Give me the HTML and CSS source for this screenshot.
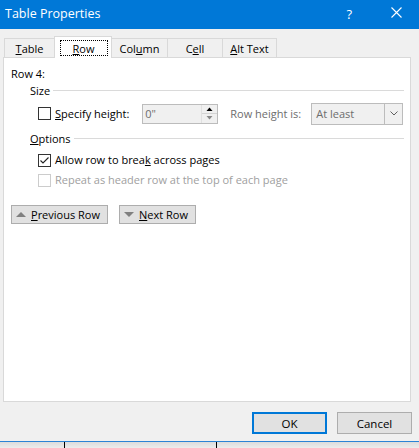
FILE: index.html
```html
<!DOCTYPE html>
<html>
<head>
<meta charset="utf-8">
<link rel="stylesheet" href="styles.css">
</head>
<body>
<div class="window">
  <div class="titlebar">
    <span class="title">Table Properties</span>
    <span class="help">?</span>
    <svg class="close" width="11" height="11" viewBox="0 0 11 11"><path d="M0.5 0.5 L10.5 10.5 M10.5 0.5 L0.5 10.5" stroke="#fff" stroke-width="1.1" fill="none"/></svg>
  </div>
  <div class="client">
    <div class="tabs">
      <div class="tab w-table"><u>T</u>able</div>
      <div class="tab tab-sel w-row"><span class="focus"><u>R</u>ow</span></div>
      <div class="tab w-col">Col<u>u</u>mn</div>
      <div class="tab w-cell">C<u>e</u>ll</div>
      <div class="tab w-alt"><u>A</u>lt Text</div>
    </div>
    <div class="panel">
      <div class="line rowlabel">Row 4:</div>
      <div class="group-head g-size"><span>Size</span><span class="rule"></span></div>
      <div class="size-row">
        <span class="cb"></span>
        <span class="lbl"><u>S</u>pecify height:</span>
        <span class="spin">
          <span class="spin-val">0"</span>
          <span class="spin-btns">
            <span class="sb sb-up"><svg width="7" height="4" viewBox="0 0 7 4"><path d="M0.5 4 L3.5 0.5 L6.5 4 Z" fill="#000"/></svg></span>
            <span class="sb sb-down"><svg width="7" height="4" viewBox="0 0 7 4"><path d="M0.5 0 L6.5 0 L3.5 3.5 Z" fill="#8a8a8a"/></svg></span>
          </span>
        </span>
        <span class="lbl dis1 rh">Row height is:</span>
        <span class="select">
          <span class="sel-val">At least</span>
          <span class="sel-btn"><svg width="8" height="5" viewBox="0 0 8 5"><path d="M0.5 0.5 L4 4 L7.5 0.5" stroke="#606060" stroke-width="1" fill="none"/></svg></span>
        </span>
      </div>
      <div class="group-head g-opt"><span><u>O</u>ptions</span><span class="rule"></span></div>
      <div class="check-row c1">
        <span class="cb"><svg width="11" height="11" viewBox="0 0 11 11"><path d="M1.5 5.5 L4 8 L9.5 2.5" stroke="#222" stroke-width="1.1" fill="none"/></svg></span>
        <span class="lbl">Allow row to brea<u>k</u> across pages</span>
      </div>
      <div class="check-row c2">
        <span class="cb cb-dis"></span>
        <span class="lbl dis2">Repeat as header row at the top of each page</span>
      </div>
      <div class="nav-row">
        <span class="btn btn-prev"><svg width="10" height="5" viewBox="0 0 10 5"><path d="M0 5 L5 0 L10 5 Z" fill="#808080"/></svg><span><u>P</u>revious Row</span></span>
        <span class="btn btn-next"><svg width="10" height="5" viewBox="0 0 10 5"><path d="M0 0 L10 0 L5 5 Z" fill="#808080"/></svg><span><u>N</u>ext Row</span></span>
      </div>
    </div>
    <div class="footer">
      <span class="dbtn dbtn-ok">OK</span>
      <span class="dbtn">Cancel</span>
    </div>
  </div>
</div>
<div class="desk">
  <span class="gap1"></span><span class="vl"></span><span class="gap2"></span><span class="vl"></span>
</div>
</body>
</html>
```

FILE: styles.css
```css
html, body {
  margin: 0;
  padding: 0;
}
body {
  width: 419px;
  height: 448px;
  overflow: hidden;
  background: #e6e6e6;
  font-family: "Open Sans", "Noto Sans", sans-serif;
  font-size: 11px;
  color: #000;
}
u { text-decoration: underline; text-underline-offset: 1px; }

.window {
  width: 419px;
  height: 442px;
  box-sizing: border-box;
  background: #f0f0f0;
  border-bottom: 1px solid #2b83d5;
}
.titlebar {
  height: 29px;
  background: #0078d7;
  color: #fff;
  display: flex;
  align-items: center;
}
.title {
  font-size: 12.5px;
  margin-left: 5px;
  line-height: 18px;
  margin-top: -1px;
}
.help {
  font-size: 13px;
  margin-left: auto;
  margin-right: 39px;
  margin-top: -2px;
}
.close {
  margin-right: 17px;
  margin-top: -4px;
}

.client {
  padding: 7px 0 0 3px;
}
.tabs {
  height: 21px;
  display: flex;
  align-items: flex-end;
  padding-left: 1px;
}
.tab {
  height: 19px;
  box-sizing: border-box;
  border: 1px solid #d9d9d9;
  border-bottom: none;
  background: #f0f0f0;
  display: flex;
  align-items: center;
  justify-content: center;
  margin-left: -1px;
  line-height: 15px;
}
.tab:first-child { margin-left: 0; }
.w-table { width: 51px; }
.w-row { width: 58px; }
.w-col { width: 57px; }
.w-cell { width: 56px; }
.w-alt { width: 55px; }
.tab-sel {
  height: 22px;
  margin-bottom: -1px;
  background: #fff;
  position: relative;
  z-index: 1;
  align-items: flex-start;
  padding-top: 3px;
}
.focus {
  width: 48px;
  height: 16px;
  box-sizing: border-box;
  border: 1px dotted #000;
  display: flex;
  align-items: center;
  justify-content: center;
  margin-left: 1px;
}

.panel {
  width: 408px;
  height: 345px;
  box-sizing: border-box;
  background: #fff;
  border: 1px solid #d9d9d9;
  padding: 8px 6px 0 7px;
}
.line { line-height: 16px; height: 16px; }
.group-head {
  display: flex;
  align-items: center;
  height: 16px;
  line-height: 16px;
  margin-left: 19px;
}
.g-size { margin-top: 1px; }
.g-opt { margin-top: 7px; }
.rule {
  flex: 1;
  height: 0;
  border-top: 1px solid #dadada;
  margin-left: 3px;
  margin-top: -1px;
}
.cb {
  width: 13px;
  height: 13px;
  box-sizing: border-box;
  border: 1px solid #333;
  background: #fff;
  display: flex;
  align-items: center;
  justify-content: center;
  flex: none;
}
.cb-dis { border-color: #cccccc; }
.lbl { line-height: 16px; margin-left: 4px; white-space: nowrap; }
.dis1 { color: #6d6d6d; }
.dis2 { color: #a0a0a0; }

.size-row {
  display: flex;
  align-items: center;
  height: 21px;
  margin-top: 4px;
  padding-left: 27px;
}
.spin {
  margin-left: 13px;
  width: 76px;
  height: 20px;
  box-sizing: border-box;
  border: 1px solid #bcbcbc;
  background: #f0f0f0;
  display: flex;
}
.spin-val {
  flex: 1;
  color: #6d6d6d;
  line-height: 18px;
  padding-left: 2px;
}
.spin-btns {
  width: 15px;
  display: flex;
  flex-direction: column;
  border-left: 1px solid #e0e0e0;
}
.sb {
  flex: 1;
  display: flex;
  align-items: center;
  justify-content: center;
  background: #f0f0f0;
}
.sb-up { border-bottom: 1px solid #d4d4d4; }
.rh { margin-left: 12px; }
.select {
  margin-left: 10px;
  width: 92px;
  height: 22px;
  box-sizing: border-box;
  border: 1px solid #bcbcbc;
  background: #f0f0f0;
  display: flex;
}
.sel-val {
  flex: 1;
  color: #6d6d6d;
  line-height: 20px;
  padding-left: 4px;
}
.sel-btn {
  width: 17px;
  border-left: 1px solid #bcbcbc;
  display: flex;
  align-items: center;
  justify-content: center;
}

.check-row {
  display: flex;
  align-items: center;
  height: 16px;
  padding-left: 27px;
}
.c1 { margin-top: 5px; }
.c2 { margin-top: 4px; }

.nav-row {
  display: flex;
  margin-top: 17px;
  gap: 11px;
}
.btn {
  height: 19px;
  box-sizing: border-box;
  border: 1px solid #adadad;
  background: #e1e1e1;
  display: flex;
  align-items: center;
  line-height: 16px;
  padding-left: 4px;
}
.btn svg { margin-right: 5px; margin-top: -1px; }
.btn-prev { width: 97px; }
.btn-next { width: 77px; }

.footer {
  display: flex;
  justify-content: flex-end;
  padding: 10px 7px 0 0;
  gap: 10px;
  height: 29px;
  box-sizing: border-box;
}
.dbtn {
  width: 75px;
  height: 22px;
  box-sizing: border-box;
  border: 1px solid #adadad;
  background: #e1e1e1;
  display: flex;
  align-items: center;
  justify-content: center;
  font-size: 11.5px;
}
.dbtn-ok {
  border: 2px solid #0078d7;
}

.desk {
  height: 6px;
  display: flex;
  background: linear-gradient(#dcdcdc, #ececec);
}
.gap1 { width: 64px; }
.gap2 { width: 151px; }
.vl { width: 1px; background: #000; }
```
